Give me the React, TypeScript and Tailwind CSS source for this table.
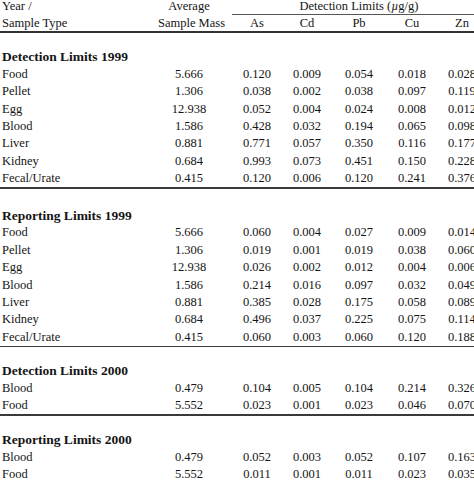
const sections = [
  {
    title: "Detection Limits 1999",
    rows: [
      ["Food", "5.666", "0.120", "0.009", "0.054", "0.018", "0.028"],
      ["Pellet", "1.306", "0.038", "0.002", "0.038", "0.097", "0.119"],
      ["Egg", "12.938", "0.052", "0.004", "0.024", "0.008", "0.012"],
      ["Blood", "1.586", "0.428", "0.032", "0.194", "0.065", "0.098"],
      ["Liver", "0.881", "0.771", "0.057", "0.350", "0.116", "0.177"],
      ["Kidney", "0.684", "0.993", "0.073", "0.451", "0.150", "0.228"],
      ["Fecal/Urate", "0.415", "0.120", "0.006", "0.120", "0.241", "0.376"],
    ],
    gap: "mt-[15px]",
  },
  {
    title: "Reporting Limits 1999",
    rows: [
      ["Food", "5.666", "0.060", "0.004", "0.027", "0.009", "0.014"],
      ["Pellet", "1.306", "0.019", "0.001", "0.019", "0.038", "0.060"],
      ["Egg", "12.938", "0.026", "0.002", "0.012", "0.004", "0.006"],
      ["Blood", "1.586", "0.214", "0.016", "0.097", "0.032", "0.049"],
      ["Liver", "0.881", "0.385", "0.028", "0.175", "0.058", "0.089"],
      ["Kidney", "0.684", "0.496", "0.037", "0.225", "0.075", "0.114"],
      ["Fecal/Urate", "0.415", "0.060", "0.003", "0.060", "0.120", "0.188"],
    ],
    gap: "mt-[18px]",
  },
  {
    title: "Detection Limits 2000",
    rows: [
      ["Blood", "0.479", "0.104", "0.005", "0.104", "0.214", "0.326"],
      ["Food", "5.552", "0.023", "0.001", "0.023", "0.046", "0.070"],
    ],
    gap: "mt-[15px]",
  },
  {
    title: "Reporting Limits 2000",
    rows: [
      ["Blood", "0.479", "0.052", "0.003", "0.052", "0.107", "0.163"],
      ["Food", "5.552", "0.011", "0.001", "0.011", "0.023", "0.035"],
    ],
    gap: "mt-[15px]",
  },
];

// label | mass | spacer | As | Cd | Pb | Cu | Zn
const cols = "grid grid-cols-[158px_62px_12px_50px_50px_54px_52px_48px]";

function DataRow({ row }: { row: string[] }) {
  const [label, mass, ...vals] = row;
  return (
    <div className={`${cols} h-[17.4px] items-center whitespace-nowrap`}>
      <div className="pl-[2px]">{label}</div>
      <div className="text-center">{mass}</div>
      <div />
      {vals.map((v, i) => (
        <div key={i} className="text-center">
          {v}
        </div>
      ))}
    </div>
  );
}

export default function App() {
  return (
    <div
      className="w-[474px] h-[481px] overflow-hidden bg-white text-[#151515] text-[12.5px] leading-none"
      style={{ fontFamily: '"Liberation Serif", "Times New Roman", serif' }}
    >
      {/* header */}
      <div className={`${cols} h-[15px] items-start whitespace-nowrap`}>
        <div className="pl-[2px]">Year /</div>
        <div className="text-center">Average</div>
        <div />
        <div className="col-span-5 h-[15px] border-b border-[#555] text-center">
          Detection Limits (<i>µ</i>g/g)
        </div>
      </div>
      <div className={`${cols} h-[16px] items-center whitespace-nowrap`}>
        <div className="pl-[2px]">Sample Type</div>
        <div className="text-center">Sample Mass</div>
        <div />
        <div className="text-center">As</div>
        <div className="text-center">Cd</div>
        <div className="text-center">Pb</div>
        <div className="text-center">Cu</div>
        <div className="text-center">Zn</div>
      </div>
      <div className="h-[2px] bg-[#333]" />

      {sections.map((s) => (
        <div key={s.title}>
          <div className={`${s.gap} h-[17.4px] flex items-center pl-[2px] font-bold text-[13.5px]`}>
            {s.title}
          </div>
          {s.rows.map((r, i) => (
            <DataRow key={i} row={r} />
          ))}
          <div className="h-[1.5px] bg-[#3a3a3a]" />
        </div>
      ))}
    </div>
  );
}
